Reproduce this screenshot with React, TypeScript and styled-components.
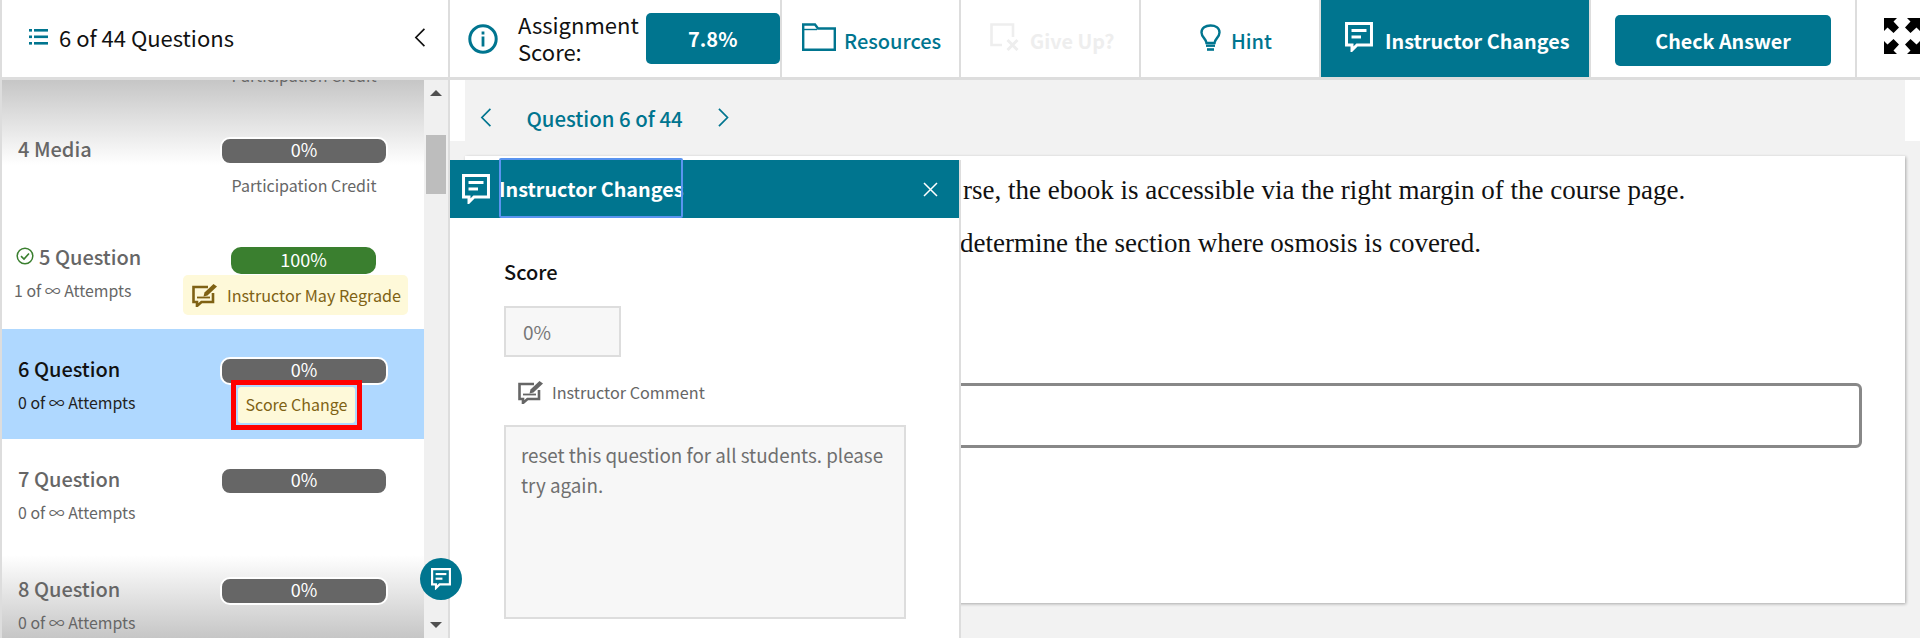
import React from "react";
import styled, { createGlobalStyle } from "styled-components";

const SANS = `"Noto Sans CJK SC", "Noto Sans", sans-serif`;
const TEAL = "#00758f";

const Global = createGlobalStyle`
  html, body { margin: 0; padding: 0; height: 100%; background: #f2f2f2; overflow: hidden; }
  * { box-sizing: border-box; }
  #root { height: 638px; }
`;

const Page = styled.div`
  width: 1920px;
  height: 638px;
  display: flex;
  flex-direction: column;
  font-family: ${SANS};
  overflow: hidden;
  background: #f2f2f2;
`;

const Header = styled.header`
  height: 80px;
  flex: none;
  display: flex;
  background: #fff;
  border-bottom: 3px solid #ddd;
  border-left: 2px solid #ddd;
`;

const HeaderCell = styled.div<{ $w: number; $active?: boolean }>`
  width: ${(p) => p.$w}px;
  flex: none;
  display: flex;
  align-items: center;
  border-right: 2px solid #ddd;
  background: ${(p) => (p.$active ? TEAL : "#fff")};
  color: ${(p) => (p.$active ? "#fff" : TEAL)};
`;

const QuestionsCell = styled(HeaderCell)`
  padding: 0 23px 3px 27px;
  justify-content: space-between;
`;

const QuestionsLabel = styled.div`
  display: flex;
  align-items: center;
  gap: 11px;
  font-size: 22px;
  line-height: 28px;
  color: #111;
`;

const ScoreCell = styled(HeaderCell)`
  padding-left: 18px;
`;

const ScoreLabel = styled.div`
  margin-left: 20px;
  width: 128px;
  font-size: 22px;
  line-height: 27px;
  color: #111;
  margin-top: -1px;
`;

const ScoreValue = styled.div`
  width: 135px;
  height: 51px;
  background: ${TEAL};
  border-radius: 5px;
  color: #fff;
  font-size: 20px;
  font-weight: 600;
  display: flex;
  align-items: center;
  justify-content: center;
`;

const ToolLabel = styled.span<{ $disabled?: boolean; $bold?: boolean }>`
  font-size: ${(p) => (p.$bold ? 19.8 : 20)}px;
  font-weight: ${(p) => (p.$bold ? 600 : 500)};
  line-height: 28px;
  white-space: nowrap;
  color: ${(p) => (p.$disabled ? "#eeeeee" : "inherit")};
  margin-top: 7px;
`;

const ToolCell = styled(HeaderCell)<{ $pad: number; $gap: number }>`
  padding-left: ${(p) => p.$pad}px;
  gap: ${(p) => p.$gap}px;
  padding-bottom: 3px;
`;

const ActionCell = styled(HeaderCell)`
  padding: 3px 0 0 24px;
`;

const ActionButton = styled.div`
  width: 216px;
  height: 51px;
  border-radius: 5px;
  background: ${TEAL};
  color: #fff;
  font-size: 19.7px;
  font-weight: 600;
  display: flex;
  align-items: center;
  justify-content: center;
`;

const ExpandCell = styled.div`
  flex: 1;
  min-width: 0;
  overflow: hidden;
  display: flex;
  align-items: center;
  padding: 0 0 5px 27px;
`;

const Body = styled.div`
  flex: 1;
  min-height: 0;
  display: flex;
  position: relative;
`;

const Sidebar = styled.aside`
  width: 449px;
  flex: none;
  display: flex;
  background: #fff;
  border-left: 2px solid #ddd;
  position: relative;
`;

const List = styled.div`
  width: 422px;
  flex: none;
  overflow: hidden;
  position: relative;
`;

const Rows = styled.div`
  margin-top: -81px;
  position: relative;
  z-index: 1;
`;

const Row = styled.div<{ $selected?: boolean }>`
  height: 110px;
  display: grid;
  grid-template-columns: 182px 240px;
  background: ${(p) => (p.$selected ? "#afd8ff" : "transparent")};
`;

const RowInfo = styled.div`
  display: flex;
  flex-direction: column;
  padding-left: 16px;
  color: #666;
`;

const RowName = styled.div<{ $selected?: boolean; $pass?: boolean }>`
  display: flex;
  align-items: center;
  gap: 5px;
  height: 28px;
  margin-top: ${(p) => (p.$pass ? 23 : 25)}px;
  font-size: 20px;
  font-weight: 500;
  margin-left: ${(p) => (p.$pass ? -2 : 0)}px;
  color: ${(p) => (p.$selected ? "#111" : "#666")};
`;

const Attempts = styled.div<{ $selected?: boolean; $pass?: boolean }>`
  font-size: 15.9px;
  line-height: 24px;
  margin-top: 9px;
  margin-left: ${(p) => (p.$pass ? -4 : 0)}px;
  color: ${(p) => (p.$selected ? "#222" : "#666")};
`;

const RowStatus = styled.div`
  display: flex;
  flex-direction: column;
  align-items: center;
  padding-top: 28px;
  position: relative;
`;

const Pill = styled.div<{ $green?: boolean }>`
  width: ${(p) => (p.$green ? 145 : 168)}px;
  height: ${(p) => (p.$green ? 27 : 28)}px;
  margin-left: ${(p) => (p.$green ? -1 : 0)}px;
  border-radius: 10px;
  border: ${(p) => (p.$green ? "0" : "2px solid #fff")};
  background: ${(p) => (p.$green ? "#3a7f2f" : "#666")};
  color: #fff;
  font-size: 18px;
  line-height: ${(p) => (p.$green ? 24 : 20)}px;
  text-align: center;
`;

const Credit = styled.div`
  margin-top: 8px;
  font-size: 16px;
  line-height: 24px;
  color: #666;
`;

const Regrade = styled.div`
  width: 225px;
  height: 40px;
  margin: 1px 0 0 -17px;
  display: flex;
  align-items: center;
  gap: 9px;
  padding-left: 9px;
  border-radius: 5px;
  background: #fef9d9;
  color: #7f6214;
  font-size: 16.2px;
  white-space: nowrap;
`;

const ScoreChange = styled.div`
  width: 131px;
  height: 50px;
  margin: -5px 0 0 -15px;
  position: relative;
  border: 5px solid #f00;
  background: #afd8ff;
  padding: 2px;
  color: #7f6214;
  font-size: 16px;
`;

const ScoreChangeInner = styled.div`
  height: 100%;
  padding-bottom: 2px;
  background: #fef9d9;
  border-radius: 3px;
  display: flex;
  align-items: center;
  justify-content: center;
`;

const Fade = styled.div<{ $bottom?: boolean }>`
  position: absolute;
  left: 0;
  right: 0;
  height: ${(p) => (p.$bottom ? 83 : 85)}px;
  ${(p) => (p.$bottom ? "bottom: 0;" : "top: 0;")}
  pointer-events: none;
  background: linear-gradient(
    ${(p) => (p.$bottom ? "to top" : "to bottom")},
    rgb(198, 198, 198),
    rgba(255, 255, 255, 0)
  );
`;

const Scrollbar = styled.div`
  width: 26px;
  flex: none;
  background: #f0f0f0;
  display: flex;
  flex-direction: column;
  align-items: center;
  border-right: 2px solid #ddd;
  padding-top: 10px;
  position: relative;
`;

const Thumb = styled.div`
  position: absolute;
  top: 55px;
  left: 2px;
  width: 20px;
  height: 59px;
  background: #bdbdbd;
`;

const ArrowUp = styled.div`
  width: 0;
  height: 0;
  border-left: 6px solid transparent;
  border-right: 6px solid transparent;
  border-bottom: 6px solid #505050;
`;

const ArrowDown = styled.div`
  position: absolute;
  bottom: 10px;
  left: 6px;
  width: 0;
  height: 0;
  border-left: 6px solid transparent;
  border-right: 6px solid transparent;
  border-top: 6px solid #505050;
`;

const ChatBubble = styled.div`
  position: absolute;
  left: 418px;
  top: 478px;
  width: 42px;
  height: 42px;
  border-radius: 50%;
  background: ${TEAL};
  display: flex;
  align-items: center;
  justify-content: center;
  z-index: 3;
`;

const Main = styled.main`
  flex: 1;
  min-width: 0;
  display: flex;
  flex-direction: column;
  background: #f2f2f2;
`;

const NavWrap = styled.div`
  background: #fff;
  height: 61px;
  flex: none;
`;

const NavInner = styled.div`
  height: 61px;
  margin: 0 15px 0 16px;
  background: #f2f2f2;
  display: flex;
  align-items: center;
  color: ${TEAL};
  font-size: 20.4px;
  font-weight: 500;
  padding: 14px 0 0 15px;
  gap: 35px;
`;

const Card = styled.section`
  margin: 15px 15px 0 16px;
  height: 447px;
  flex: none;
  background: #fff;
  box-shadow: 1px 1px 3px rgba(0, 0, 0, 0.3);
  padding: 20px 43px 0 495px;
  font-family: "Liberation Serif", "Times New Roman", serif;
  color: #111;
  font-size: 27px;
`;

const Para = styled.p`
  margin: 0 0 25px;
  line-height: 28px;
  white-space: nowrap;
  &:first-child {
    text-indent: 3px;
  }
`;

const AnswerBox = styled.div`
  height: 65px;
  margin: 126px 0 0 -400px;
  border: 3px solid #888;
  border-radius: 6px;
`;

const Panel = styled.aside`
  position: absolute;
  left: 449px;
  top: 80px;
  bottom: -1px;
  width: 512px;
  background: #fff;
  border-left: 1px solid #ddd;
  border-right: 2px solid #ddd;
  z-index: 2;
  display: flex;
  flex-direction: column;
`;

const PanelHead = styled.div`
  height: 58px;
  flex: none;
  background: ${TEAL};
  display: flex;
  align-items: center;
  color: #fff;
  padding: 0 21px 0 12px;
  position: relative;
`;

const PanelTitle = styled.div`
  margin: -2px 0 0 9px;
  height: 60px;
  width: 184px;
  outline: 2px solid #5a94f0;
  outline-offset: -2px;
  border-radius: 2px;
  display: flex;
  align-items: center;
  font-size: 19.8px;
  font-weight: 600;
  white-space: nowrap;
`;

const Close = styled.div`
  margin-left: auto;
  display: flex;
`;

const PanelBody = styled.div`
  padding: 0 0 0 54px;
  display: flex;
  flex-direction: column;
  align-items: flex-start;
`;

const ScoreTitle = styled.div`
  margin-top: 39px;
  font-size: 20px;
  line-height: 30px;
  font-weight: 500;
  color: #111;
`;

const ScoreInput = styled.div`
  width: 117px;
  height: 51px;
  margin-top: 19px;
  border: 2px solid #ddd;
  background: #f7f7f7;
  padding-left: 17px;
  display: flex;
  align-items: center;
  font-size: 19px;
  color: #777;
`;

const CommentLabel = styled.div`
  display: flex;
  align-items: center;
  gap: 8px;
  margin: 23px 0 0 14px;
  height: 24px;
  font-size: 16.2px;
  color: #666;
`;

const CommentBox = styled.div`
  width: 402px;
  height: 194px;
  margin-top: 21px;
  border: 2px solid #ddd;
  background: #f7f7f7;
  padding: 13px 15px;
  font-size: 18.8px;
  line-height: 30px;
  color: #6f6f6f;
`;

const ChatIcon = ({ size, color, sw = 2.2 }: { size: number; color: string; sw?: number }) => (
  <svg width={size} height={size * 1.07} viewBox="0 0 28 30" fill="none" style={{ flex: "none" }}>
    <path d="M1.5 1.5H26.5V23H12L7 28V23H1.5Z" stroke={color} strokeWidth={sw + 0.8} />
    <path d="M6.5 8.5H21.5" stroke={color} strokeWidth={3} />
    <path d="M6.5 15H16" stroke={color} strokeWidth={3} />
  </svg>
);

const EditIcon = ({ color, w = 26, h = 24 }: { color: string; w?: number; h?: number }) => (
  <svg width={w} height={h} viewBox="0 0 26 24" fill="none" style={{ flex: "none" }}>
    <path d="M16 4H1.5V19H5V23L9.5 19H21V10" stroke={color} strokeWidth={2.6} />
    <path d="M5 14.5H18" stroke={color} strokeWidth={1.8} />
    <path d="M11.5 13.5L12.5 9.5L21.5 1L25 3.5L15.5 12.5Z" fill={color} />
  </svg>
);

const Chevron = ({ dir, color, h = 18 }: { dir: "left" | "right"; color: string; h?: number }) => (
  <svg width={h * 0.6} height={h} viewBox="0 0 12 20" fill="none" style={{ flex: "none" }}>
    <path
      d={dir === "left" ? "M11 1L2 10L11 19" : "M1 1L10 10L1 19"}
      stroke={color}
      strokeWidth={1.8}
    />
  </svg>
);

const ListIcon = () => (
  <svg width="19" height="18" viewBox="0 0 19 18" fill={TEAL}>
    <rect x="0" y="1" width="3" height="2.6" />
    <rect x="5" y="1" width="14" height="2.6" />
    <rect x="0" y="7.5" width="3" height="2.6" />
    <rect x="5" y="7.5" width="14" height="2.6" />
    <rect x="0" y="14" width="3" height="2.6" />
    <rect x="5" y="14" width="14" height="2.6" />
  </svg>
);

const InfoIcon = () => (
  <svg width="30" height="30" viewBox="0 0 30 30" fill="none" style={{ flex: "none" }}>
    <circle cx="15" cy="15" r="13.2" stroke={TEAL} strokeWidth="3" />
    <rect x="13.6" y="12.5" width="2.8" height="10" fill={TEAL} />
    <rect x="13.6" y="7.5" width="2.8" height="3" fill={TEAL} />
  </svg>
);

const FolderIcon = () => (
  <svg width="34" height="28" viewBox="0 0 34 28" fill="none" style={{ flex: "none" }}>
    <path d="M1.2 26.8V1.5H13L16 5.5H32.8V26.8Z" stroke={TEAL} strokeWidth="2.4" />
    <path d="M1.2 6.5H15" stroke={TEAL} strokeWidth="1.4" />
  </svg>
);

const GiveUpIcon = () => (
  <svg width="30" height="28" viewBox="0 0 30 28" fill="none" style={{ flex: "none" }}>
    <path d="M12 22H1.5V1.5H23V14" stroke="#eee" strokeWidth="2.6" />
    <path d="M17.5 17L27.5 27M27.5 17L17.5 27" stroke="#eee" strokeWidth="3" />
  </svg>
);

const BulbIcon = () => (
  <svg width="21" height="27" viewBox="0 0 21 27" fill="none" style={{ flex: "none" }}>
    <path
      d="M6.5 19C6.5 15 1.5 13.5 1.5 8.5C1.5 4 5.5 1.5 10.5 1.5C15.5 1.5 19.5 4 19.5 8.5C19.5 13.5 14.5 15 14.5 19Z"
      stroke={TEAL}
      strokeWidth="2.4"
    />
    <rect x="6" y="20.5" width="9" height="2.4" fill={TEAL} />
    <rect x="7" y="24.2" width="7" height="2.6" fill={TEAL} />
  </svg>
);

const ExpandIcon = () => (
  <svg width="36" height="36" viewBox="0 0 36 36" fill="#000" style={{ flex: "none" }}>
    <path d="M0 0H13L9.5 3.5L15 9.5L9.5 15L3.5 9.5L0 13Z" />
    <path d="M36 0H23L26.5 3.5L21 9.5L26.5 15L32.5 9.5L36 13Z" />
    <path d="M0 36H13L9.5 32.5L15 26.5L9.5 21L3.5 26.5L0 23Z" />
    <path d="M36 36H23L26.5 32.5L21 26.5L26.5 21L32.5 26.5L36 23Z" />
  </svg>
);

const CheckIcon = () => (
  <svg width="18" height="18" viewBox="0 0 18 18" fill="none" style={{ flex: "none" }}>
    <circle cx="9" cy="9" r="7.8" stroke="#3a7f2f" strokeWidth="1.5" />
    <path d="M5 9.2L8 12L13 6.5" stroke="#3a7f2f" strokeWidth="1.6" />
  </svg>
);

const CloseIcon = () => (
  <svg width="15" height="15" viewBox="0 0 15 15" fill="none">
    <path d="M1 1L14 14M14 1L1 14" stroke="#fff" strokeWidth="1.5" />
  </svg>
);

type Q = { n: number; kind: "Media" | "Question"; pct: string; attempts?: string; pass?: boolean; selected?: boolean };

const rows: Q[] = [
  { n: 3, kind: "Media", pct: "0%" },
  { n: 4, kind: "Media", pct: "0%" },
  { n: 5, kind: "Question", pct: "100%", attempts: "1 of ∞ Attempts", pass: true },
  { n: 6, kind: "Question", pct: "0%", attempts: "0 of ∞ Attempts", selected: true },
  { n: 7, kind: "Question", pct: "0%", attempts: "0 of ∞ Attempts" },
  { n: 8, kind: "Question", pct: "0%", attempts: "0 of ∞ Attempts" },
];

export default function App() {
  return (
    <Page>
      <Global />
      <Header>
        <QuestionsCell $w={448}>
          <QuestionsLabel>
            <ListIcon />
            6 of 44 Questions
          </QuestionsLabel>
          <Chevron dir="left" color="#111" h={19} />
        </QuestionsCell>
        <ScoreCell $w={332}>
          <InfoIcon />
          <ScoreLabel>
            Assignment
            <br />
            Score:
          </ScoreLabel>
          <ScoreValue>7.8%</ScoreValue>
        </ScoreCell>
        <ToolCell $w={179} $pad={20} $gap={8}>
          <FolderIcon />
          <ToolLabel>Resources</ToolLabel>
        </ToolCell>
        <ToolCell $w={180} $pad={29} $gap={10}>
          <GiveUpIcon />
          <ToolLabel $disabled $bold>Give Up?</ToolLabel>
        </ToolCell>
        <ToolCell $w={180} $pad={59} $gap={10}>
          <BulbIcon />
          <ToolLabel>Hint</ToolLabel>
        </ToolCell>
        <ToolCell $w={270} $pad={24} $gap={12} $active>
          <ChatIcon size={28} color="#fff" />
          <ToolLabel $bold>Instructor Changes</ToolLabel>
        </ToolCell>
        <ActionCell $w={266}>
          <ActionButton>Check Answer</ActionButton>
        </ActionCell>
        <ExpandCell>
          <ExpandIcon />
        </ExpandCell>
      </Header>
      <Body>
        <Sidebar>
          <List>
            <Fade />
            <Fade $bottom />
            <Rows>
              {rows.map((r) => (
                <Row key={r.n} $selected={r.selected}>
                  <RowInfo>
                    <RowName $selected={r.selected} $pass={r.pass}>
                      {r.pass && <CheckIcon />}
                      {r.n} {r.kind}
                    </RowName>
                    {r.attempts && (
                      <Attempts $selected={r.selected} $pass={r.pass}>
                        {r.attempts}
                      </Attempts>
                    )}
                  </RowInfo>
                  <RowStatus>
                    <Pill $green={r.pass}>{r.pct}</Pill>
                    {r.kind === "Media" && <Credit>Participation Credit</Credit>}
                    {r.pass && (
                      <Regrade>
                        <EditIcon color="#7f6214" />
                        Instructor May Regrade
                      </Regrade>
                    )}
                    {r.selected && (
                      <ScoreChange>
                        <ScoreChangeInner>Score Change</ScoreChangeInner>
                      </ScoreChange>
                    )}
                  </RowStatus>
                </Row>
              ))}
            </Rows>
          </List>
          <Scrollbar>
            <ArrowUp />
            <Thumb />
            <ArrowDown />
          </Scrollbar>
          <ChatBubble>
            <ChatIcon size={20} color="#fff" />
          </ChatBubble>
        </Sidebar>
        <Main>
          <NavWrap>
            <NavInner>
              <Chevron dir="left" color={TEAL} h={19} />
              <span>Question 6 of 44</span>
              <Chevron dir="right" color={TEAL} h={19} />
            </NavInner>
          </NavWrap>
          <Card>
            <Para>rse, the ebook is accessible via the right margin of the course page.</Para>
            <Para>determine the section where osmosis is covered.</Para>
            <AnswerBox />
          </Card>
        </Main>
        <Panel>
          <PanelHead>
            <ChatIcon size={28} color="#fff" />
            <PanelTitle>Instructor Changes</PanelTitle>
            <Close>
              <CloseIcon />
            </Close>
          </PanelHead>
          <PanelBody>
            <ScoreTitle>Score</ScoreTitle>
            <ScoreInput>0%</ScoreInput>
            <CommentLabel>
              <EditIcon color="#666" />
              Instructor Comment
            </CommentLabel>
            <CommentBox>reset this question for all students. please try again.</CommentBox>
          </PanelBody>
        </Panel>
      </Body>
    </Page>
  );
}
